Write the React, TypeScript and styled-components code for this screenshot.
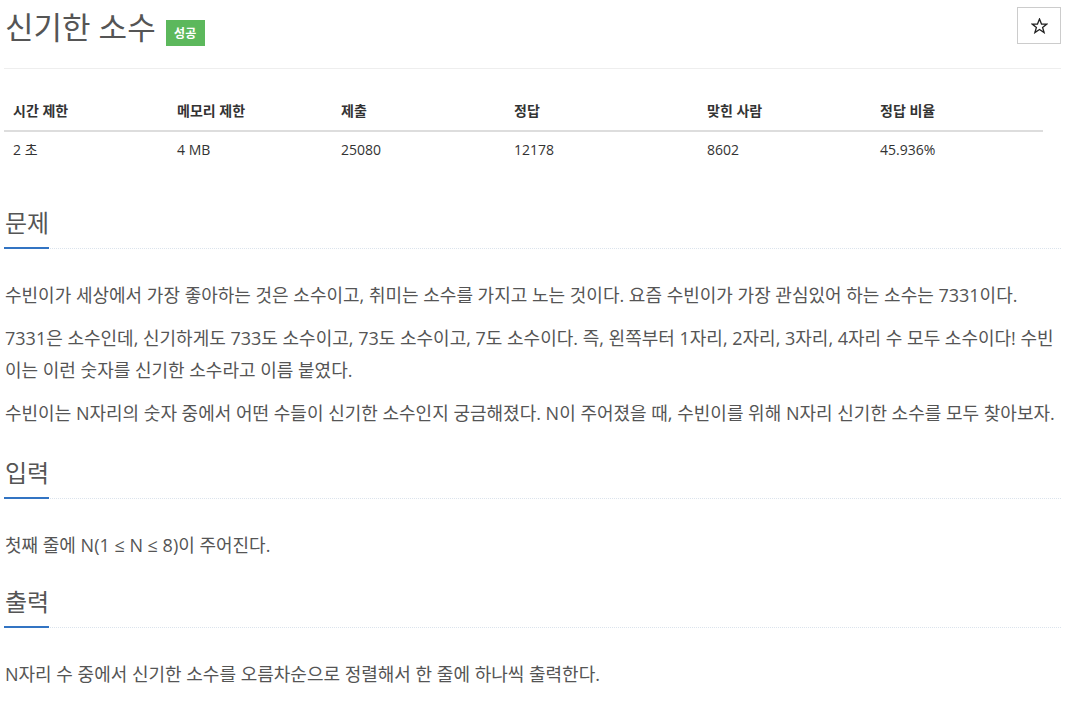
import React from "react";
import styled, { createGlobalStyle } from "styled-components";

const Global = createGlobalStyle`
  html, body { margin: 0; padding: 0; background: #fff; }
  body {
    font-family: "Open Sans", "Noto Sans CJK KR", sans-serif;
    color: #333;
    font-size: 14px;
  }
  * { box-sizing: border-box; }
`;

const Page = styled.div`
  width: 1080px;
  padding: 0 19px 0 4px;
`;

const Header = styled.div`
  display: flex;
  justify-content: space-between;
  align-items: flex-start;
  height: 69px;
  border-bottom: 1px solid #eee;
`;

const TitleWrap = styled.div`
  display: flex;
  align-items: flex-end;
  gap: 10px;
  padding-top: 7px;
`;

const Title = styled.h1`
  margin: 0;
  font-size: 31px;
  font-weight: 400;
  line-height: 40px;
  color: #555;
  padding-left: 1px;
`;

const Badge = styled.span`
  display: inline-flex;
  align-items: center;
  justify-content: center;
  width: 39px;
  height: 26px;
  background: #5cb85c;
  color: #fff;
  font-size: 12px;
  font-weight: 700;
  margin-bottom: 1px;
`;

const StarButton = styled.button`
  margin-top: 7px;
  width: 44px;
  height: 37px;
  border: 1px solid #ccc;
  background: #fff;
  display: flex;
  align-items: center;
  justify-content: center;
  padding: 0;
`;

const Table = styled.table`
  margin-top: 24px;
  width: 1039px;
  border-collapse: collapse;
  table-layout: fixed;
`;

const Th = styled.th<{ $w: number }>`
  width: ${(p) => p.$w}px;
  text-align: left;
  font-weight: 700;
  font-size: 14px;
  line-height: 20px;
  padding: 8px 8px 9px 9px;
  border-bottom: 2px solid #ddd;
  color: #333;
`;

const Td = styled.td`
  font-size: 14px;
  line-height: 20px;
  padding: 8px 8px 8px 9px;
  color: #333;
`;

const Section = styled.section<{ $top: number }>`
  margin-top: ${(p) => p.$top}px;
`;

const Headline = styled.div`
  border-bottom: 1px dotted #dbe3ec;
  margin-bottom: 30px;
`;

const H2 = styled.h2`
  display: inline-block;
  margin: 0 0 -1px 0;
  font-size: 24px;
  font-weight: 400;
  line-height: 33px;
  color: #555;
  padding: 0 0 8px 1px;
  border-bottom: 2px solid #3274c3;
`;

const P = styled.p`
  margin: 0 0 10px 0;
  font-size: 18px;
  line-height: 32.5px;
  color: #555;
  padding-left: 1px;
`;

const StarIcon = () => (
  <svg width="17" height="16" viewBox="0 0 17 16" aria-hidden="true">
    <polygon
      points="8.5,1 10.5,6 15.8,6.1 11.6,9.4 13.1,14.6 8.5,11.5 3.9,14.6 5.4,9.4 1.2,6.1 6.5,6"
      fill="none"
      stroke="#222"
      strokeWidth="1.3"
      strokeLinejoin="miter"
    />
  </svg>
);

const cols = [
  { h: "시간 제한", v: "2 초", w: 164 },
  { h: "메모리 제한", v: "4 MB", w: 164 },
  { h: "제출", v: "25080", w: 173 },
  { h: "정답", v: "12178", w: 193 },
  { h: "맞힌 사람", v: "8602", w: 173 },
  { h: "정답 비율", v: "45.936%", w: 172 },
];

export default function App() {
  return (
    <Page>
      <Global />
      <Header>
        <TitleWrap>
          <Title>신기한 소수</Title>
          <Badge>성공</Badge>
        </TitleWrap>
        <StarButton aria-label="star">
          <StarIcon />
        </StarButton>
      </Header>
      <Table>
        <thead>
          <tr>
            {cols.map((c) => (
              <Th key={c.h} $w={c.w}>
                {c.h}
              </Th>
            ))}
          </tr>
        </thead>
        <tbody>
          <tr>
            {cols.map((c) => (
              <Td key={c.h}>{c.v}</Td>
            ))}
          </tr>
        </tbody>
      </Table>
      <Section $top={38}>
        <Headline>
          <H2>문제</H2>
        </Headline>
        <P>
          수빈이가 세상에서 가장 좋아하는 것은 소수이고, 취미는 소수를 가지고 노는 것이다. 요즘 수빈이가 가장 관심있어 하는 소수는 7331이다.
        </P>
        <P>
          7331은 소수인데, 신기하게도 733도 소수이고, 73도 소수이고, 7도 소수이다. 즉, 왼쪽부터 1자리, 2자리, 3자리, 4자리 수 모두 소수이다! 수빈이는 이런 숫자를 신기한 소수라고 이름 붙였다.
        </P>
        <P>
          수빈이는 N자리의 숫자 중에서 어떤 수들이 신기한 소수인지 궁금해졌다. N이 주어졌을 때, 수빈이를 위해 N자리 신기한 소수를 모두 찾아보자.
        </P>
      </Section>
      <Section $top={27}>
        <Headline>
          <H2>입력</H2>
        </Headline>
        <P>첫째 줄에 N(1 ≤ N ≤ 8)이 주어진다.</P>
      </Section>
      <Section $top={23}>
        <Headline>
          <H2>출력</H2>
        </Headline>
        <P>N자리 수 중에서 신기한 소수를 오름차순으로 정렬해서 한 줄에 하나씩 출력한다.</P>
      </Section>
    </Page>
  );
}
